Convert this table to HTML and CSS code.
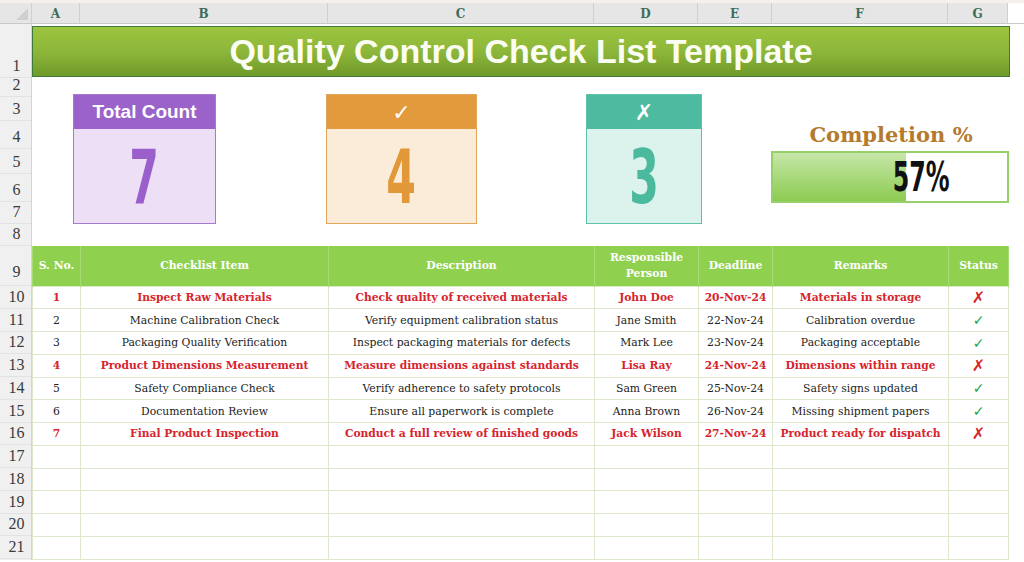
FILE: index.html
```html
<!DOCTYPE html>
<html>
<head>
<meta charset="utf-8">
<link rel="stylesheet" href="styles.css">
</head>
<body>
<div class="app">
  <div class="topstrip"></div>
  <div class="colheads">
    <div class="corner"><span class="tri"></span></div>
    <div class="ch w-a">A</div>
    <div class="ch w-b">B</div>
    <div class="ch w-c">C</div>
    <div class="ch w-d">D</div>
    <div class="ch w-e">E</div>
    <div class="ch w-f">F</div>
    <div class="ch w-g">G</div>
    <div class="ch-rest"></div>
  </div>
  <div class="main">
    <div class="rowheads">
      <div class="rh h1">1</div>
      <div class="rh h2">2</div>
      <div class="rh h3">3</div>
      <div class="rh h4">4</div>
      <div class="rh h5">5</div>
      <div class="rh h6">6</div>
      <div class="rh h7">7</div>
      <div class="rh h8">8</div>
      <div class="rh h9">9</div>
      <div class="rh hr">10</div>
      <div class="rh hr">11</div>
      <div class="rh hr">12</div>
      <div class="rh hr">13</div>
      <div class="rh hr">14</div>
      <div class="rh hr">15</div>
      <div class="rh hr">16</div>
      <div class="rh hr">17</div>
      <div class="rh hr">18</div>
      <div class="rh hr">19</div>
      <div class="rh hr">20</div>
      <div class="rh hr">21</div>
    </div>
    <div class="sheet">
      <div class="row1">
        <div class="title">Quality Control Check List Template</div>
      </div>
      <div class="dash">
        <div class="card purple">
          <div class="card-head">Total Count</div>
          <div class="card-body"><span class="big">7</span></div>
        </div>
        <div class="card orange">
          <div class="card-head sym">✓</div>
          <div class="card-body"><span class="big">4</span></div>
        </div>
        <div class="card teal">
          <div class="card-head sym">✗</div>
          <div class="card-body"><span class="big">3</span></div>
        </div>
        <div class="completion">
          <div class="comp-label">Completion %</div>
          <div class="bar">
            <div class="bar-fill" style="width:57%"></div>
            <span class="bar-text">57%</span>
          </div>
        </div>
      </div>
      <table class="grid">
        <colgroup>
          <col class="w-a"><col class="w-b"><col class="w-c"><col class="w-d"><col class="w-e"><col class="w-f"><col class="w-g">
        </colgroup>
        <thead>
          <tr>
            <th>S. No.</th>
            <th>Checklist Item</th>
            <th>Description</th>
            <th>Responsible<br>Person</th>
            <th>Deadline</th>
            <th>Remarks</th>
            <th>Status</th>
          </tr>
        </thead>
        <tbody>
          <tr class="red">
            <td>1</td><td>Inspect Raw Materials</td><td>Check quality of received materials</td><td>John Doe</td><td>20-Nov-24</td><td>Materials in storage</td><td class="st no">✗</td>
          </tr>
          <tr>
            <td>2</td><td>Machine Calibration Check</td><td>Verify equipment calibration status</td><td>Jane Smith</td><td>22-Nov-24</td><td>Calibration overdue</td><td class="st ok">✓</td>
          </tr>
          <tr>
            <td>3</td><td>Packaging Quality Verification</td><td>Inspect packaging materials for defects</td><td>Mark Lee</td><td>23-Nov-24</td><td>Packaging acceptable</td><td class="st ok">✓</td>
          </tr>
          <tr class="red">
            <td>4</td><td>Product Dimensions Measurement</td><td>Measure dimensions against standards</td><td>Lisa Ray</td><td>24-Nov-24</td><td>Dimensions within range</td><td class="st no">✗</td>
          </tr>
          <tr>
            <td>5</td><td>Safety Compliance Check</td><td>Verify adherence to safety protocols</td><td>Sam Green</td><td>25-Nov-24</td><td>Safety signs updated</td><td class="st ok">✓</td>
          </tr>
          <tr>
            <td>6</td><td>Documentation Review</td><td>Ensure all paperwork is complete</td><td>Anna Brown</td><td>26-Nov-24</td><td>Missing shipment papers</td><td class="st ok">✓</td>
          </tr>
          <tr class="red">
            <td>7</td><td>Final Product Inspection</td><td>Conduct a full review of finished goods</td><td>Jack Wilson</td><td>27-Nov-24</td><td>Product ready for dispatch</td><td class="st no">✗</td>
          </tr>
          <tr class="empty"><td></td><td></td><td></td><td></td><td></td><td></td><td></td></tr>
          <tr class="empty"><td></td><td></td><td></td><td></td><td></td><td></td><td></td></tr>
          <tr class="empty"><td></td><td></td><td></td><td></td><td></td><td></td><td></td></tr>
          <tr class="empty"><td></td><td></td><td></td><td></td><td></td><td></td><td></td></tr>
          <tr class="empty"><td></td><td></td><td></td><td></td><td></td><td></td><td></td></tr>
        </tbody>
      </table>
    </div>
  </div>
</div>
</body>
</html>
```
FILE: styles.css
```css
* { box-sizing: border-box; }
html, body { margin: 0; padding: 0; background: #fff; }
body { width: 1024px; height: 562px; overflow: hidden; font-family: "DejaVu Serif", serif; }

.app { width: 1024px; }
.topstrip { height: 3px; background: #f6efec; }

.colheads { display: flex; height: 21px; background: #e6e6e6; border-bottom: 1px solid #c9c9c9; }
.corner { width: 32px; position: relative; border-right: 1px solid #d0d0d0; }
.tri { position: absolute; right: 3px; bottom: 3px; width: 0; height: 0; border-left: 12px solid transparent; border-bottom: 12px solid #cfcfcf; }
.ch { display: flex; align-items: center; justify-content: center; border-right: 1px solid #d0d0d0; color: #3e6b5a; font-family: "DejaVu Serif", serif; font-weight: bold; font-size: 12px; padding-top: 1px; }
.ch-rest { flex: 1; background: #fff; }

.w-a { width: 48px; }
.w-b { width: 248px; }
.w-c { width: 266px; }
.w-d { width: 104px; }
.w-e { width: 74px; }
.w-f { width: 176px; }
.w-g { width: 60px; }

.main { display: flex; }
.rowheads { width: 32px; background: #f0f0f0; border-right: 1px solid #d4d4d4; display: flex; flex-direction: column; }
.rh { display: flex; align-items: flex-end; justify-content: center; font-family: "Liberation Serif", serif; font-size: 16px; color: #3a3a3a; line-height: 1; padding-bottom: 3px; border-bottom: 1px solid #e2e2e2; padding-left: 2px; }
.h1 { height: 54px; }
.h2 { height: 19px; }
.h3 { height: 24px; }
.h4 { height: 28px; }
.h5 { height: 25px; }
.h6 { height: 28px; }
.h7 { height: 22px; }
.h8 { height: 22px; }
.h9 { height: 40px; padding-bottom: 5px; }
.hr { height: 22.75px; }

.sheet { width: 992px; }
.row1 { height: 54px; padding-top: 2px; }
.title {
  width: 978px; height: 51px;
  background: linear-gradient(to bottom, #9cc43f 0%, #8db73a 50%, #6f9a29 100%);
  border: 1px solid #3f7a3c;
  color: #fbfdf2; font-family: "Liberation Sans", Arial, sans-serif; font-weight: bold; font-size: 34px;
  display: flex; align-items: center; justify-content: center; padding-bottom: 1px;
}

.dash { height: 168px; display: flex; align-items: flex-start; padding-top: 16px; }
.card { height: 130px; display: flex; flex-direction: column; border: 1px solid; }
.card-head { height: 34px; display: flex; align-items: center; justify-content: center; color: #fff; font-family: "Liberation Sans", Arial, sans-serif; font-weight: bold; font-size: 19px; }
.card-head.sym { font-family: "DejaVu Sans", sans-serif; font-size: 22px; font-weight: bold; }
.card-body { flex: 1; display: flex; align-items: center; justify-content: center; }
.big { display: inline-block; font-family: "DejaVu Sans Condensed", "DejaVu Sans", sans-serif; font-weight: bold; font-size: 74px; line-height: 1; transform: scaleX(0.64); padding-top: 2px; }

.purple { width: 143px; margin-left: 41px; border-color: #a679d2; }
.purple .card-head { background: #9b62c9; }
.purple .card-body { background: #ede0f6; }
.purple .big { color: #9b5fcb; }

.orange { width: 151px; margin-left: 110px; border-color: #e3a55a; }
.orange .card-head { background: #e39a3c; }
.orange .card-body { background: #fbecda; }
.orange .big { color: #e09838; }

.teal { width: 116px; margin-left: 109px; border-color: #5fc2aa; }
.teal .card-head { background: #4dbb9f; }
.teal .card-body { background: #dbf3ec; }
.teal .big { color: #4ab99d; }

.completion { width: 238px; margin-left: 69px; padding-top: 30px; display: flex; flex-direction: column; align-items: center; }
.comp-label { height: 22px; font-family: "DejaVu Serif", serif; font-weight: bold; font-size: 21px; color: #b47a2e; line-height: 22px; padding-left: 2px; white-space: nowrap; }
.bar { position: relative; width: 238px; height: 52px; margin-top: 5px; border: 2px solid #97d06a; background: #fff; display: flex; align-items: center; justify-content: center; }
.bar-fill { position: absolute; left: 0; top: 0; bottom: 0; background: linear-gradient(to bottom, #c7e6a9 0%, #a9d97b 50%, #8ccb52 100%); }
.bar-text { position: relative; display: inline-block; font-family: "DejaVu Sans Condensed", "DejaVu Sans", sans-serif; font-weight: bold; font-size: 40px; color: #111; transform: scaleX(0.66); line-height: 1; margin-left: 62px; }

.grid { border-collapse: collapse; table-layout: fixed; width: 976px; }
.grid th, .grid td { padding: 0; text-align: center; white-space: nowrap; overflow: hidden; }
.grid th { height: 40px; background: #8fd14f; color: #fff; font-family: "DejaVu Serif", serif; font-weight: bold; font-size: 10.8px; line-height: 16px; border-left: 1px solid #a6dc73; border-right: 1px solid #a6dc73; }
.grid td { height: 22.75px; border: 1px solid #dbe8c9; font-size: 10.8px; color: #222; }
.grid tr.red td { color: #d7242c; font-weight: bold; font-size: 10.7px; }
.grid td.st { font-family: "DejaVu Sans", sans-serif; font-size: 14px; font-weight: bold; }
.grid tr td.ok { color: #2aa53c; }
.grid tr.red td.no { color: #d7242c; font-size: 16px; }
```
